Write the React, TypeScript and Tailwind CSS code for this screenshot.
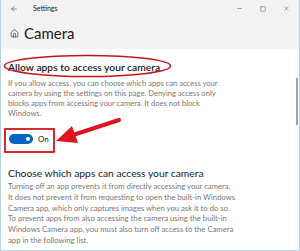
import { ArrowLeft, Minus, Square, X, Home } from 'lucide-react';

const font = { fontFamily: 'Lato, "Open Sans", sans-serif' };

function TitleBar() {
  return (
    <div className="flex h-[17px] items-center text-[#222]">
      <ArrowLeft className="ml-[9px] h-[8px] w-[8px]" strokeWidth={1.5} />
      <span className="ml-[15px] text-[7px]">Settings</span>
      <div className="ml-auto flex items-center gap-[17px] pr-[9px]">
        <Minus className="h-[7px] w-[7px]" strokeWidth={1.3} />
        <Square className="h-[6px] w-[6px]" strokeWidth={1.5} />
        <X className="h-[7px] w-[7px]" strokeWidth={1.3} />
      </div>
    </div>
  );
}

export default function App() {
  return (
    <div
      className="relative flex h-[251px] w-[300px] flex-col overflow-hidden border-x border-b border-[#b7d2e8] bg-white"
      style={font}
    >
      <div className="bg-[#f2f2f2]">
        <TitleBar />
        <div className="flex h-[32px] items-center">
          <Home className="ml-[9px] h-[9px] w-[9px] text-[#333]" strokeWidth={1.8} />
          <span className="ml-[5px] text-[15px] leading-none text-[#1a1a1a]">Camera</span>
        </div>
      </div>

      <div className="flex flex-1">
        <div className="flex-1 px-[7px] pt-[11px]">
          <h2 className="text-[10.3px] leading-[14px] font-semibold text-[#1a1a1a]">
            Allow apps to access your camera
          </h2>
          <p className="mt-[4px] whitespace-nowrap text-[7.6px] leading-[10px] text-[#777]">
            If you allow access, you can choose which apps can access your
            <br />
            camera by using the settings on this page. Denying access only
            <br />
            blocks apps from accessing your camera. It does not block
            <br />
            Windows.
          </p>

          <div className="mt-[16px] flex h-[10px] items-center">
            <div className="ml-px flex h-[10px] w-[24px] items-center justify-end rounded-full bg-[#0a64c4] pr-[3px]">
              <div className="h-[4px] w-[4px] rounded-full bg-white" />
            </div>
            <span className="ml-[5px] text-[8px] text-[#222]">On</span>
          </div>

          <h2 className="mt-[22px] text-[10.3px] leading-[14px] text-[#1a1a1a]">
            Choose which apps can access your camera
          </h2>
          <p className="mt-px whitespace-nowrap text-[7.7px] leading-[10.8px] text-[#777]">
            Turning off an app prevents it from directly accessing your camera.
            <br />
            It does not prevent it from requesting to open the built-in Windows
            <br />
            Camera app, which only captures images when you ask it to do so.
            <br />
            To prevent apps from also accessing the camera using the built-in
            <br />
            Windows Camera app, you must also turn off access to the Camera
            <br />
            app in the following list.
          </p>
        </div>
        <div className="w-[3px] pt-[29px]">
          <div className="h-[47px] w-[2px] bg-[#9aa5ab]" />
        </div>
      </div>

      {/* annotations drawn over the page */}
      <svg className="pointer-events-none absolute left-0 top-0" width="300" height="251">
        <ellipse cx="86.5" cy="66" rx="83" ry="10.5" fill="none" stroke="#c8141c" strokeWidth="1.6" />
        <rect x="4" y="129" width="49" height="23" fill="none" stroke="#d0161c" strokeWidth="1.8" />
        <line x1="118" y1="120" x2="72" y2="135" stroke="#e0141e" strokeWidth="4" strokeLinecap="round" />
        <polygon points="55,141 71,126 77,143" fill="#e0141e" />
      </svg>
    </div>
  );
}
